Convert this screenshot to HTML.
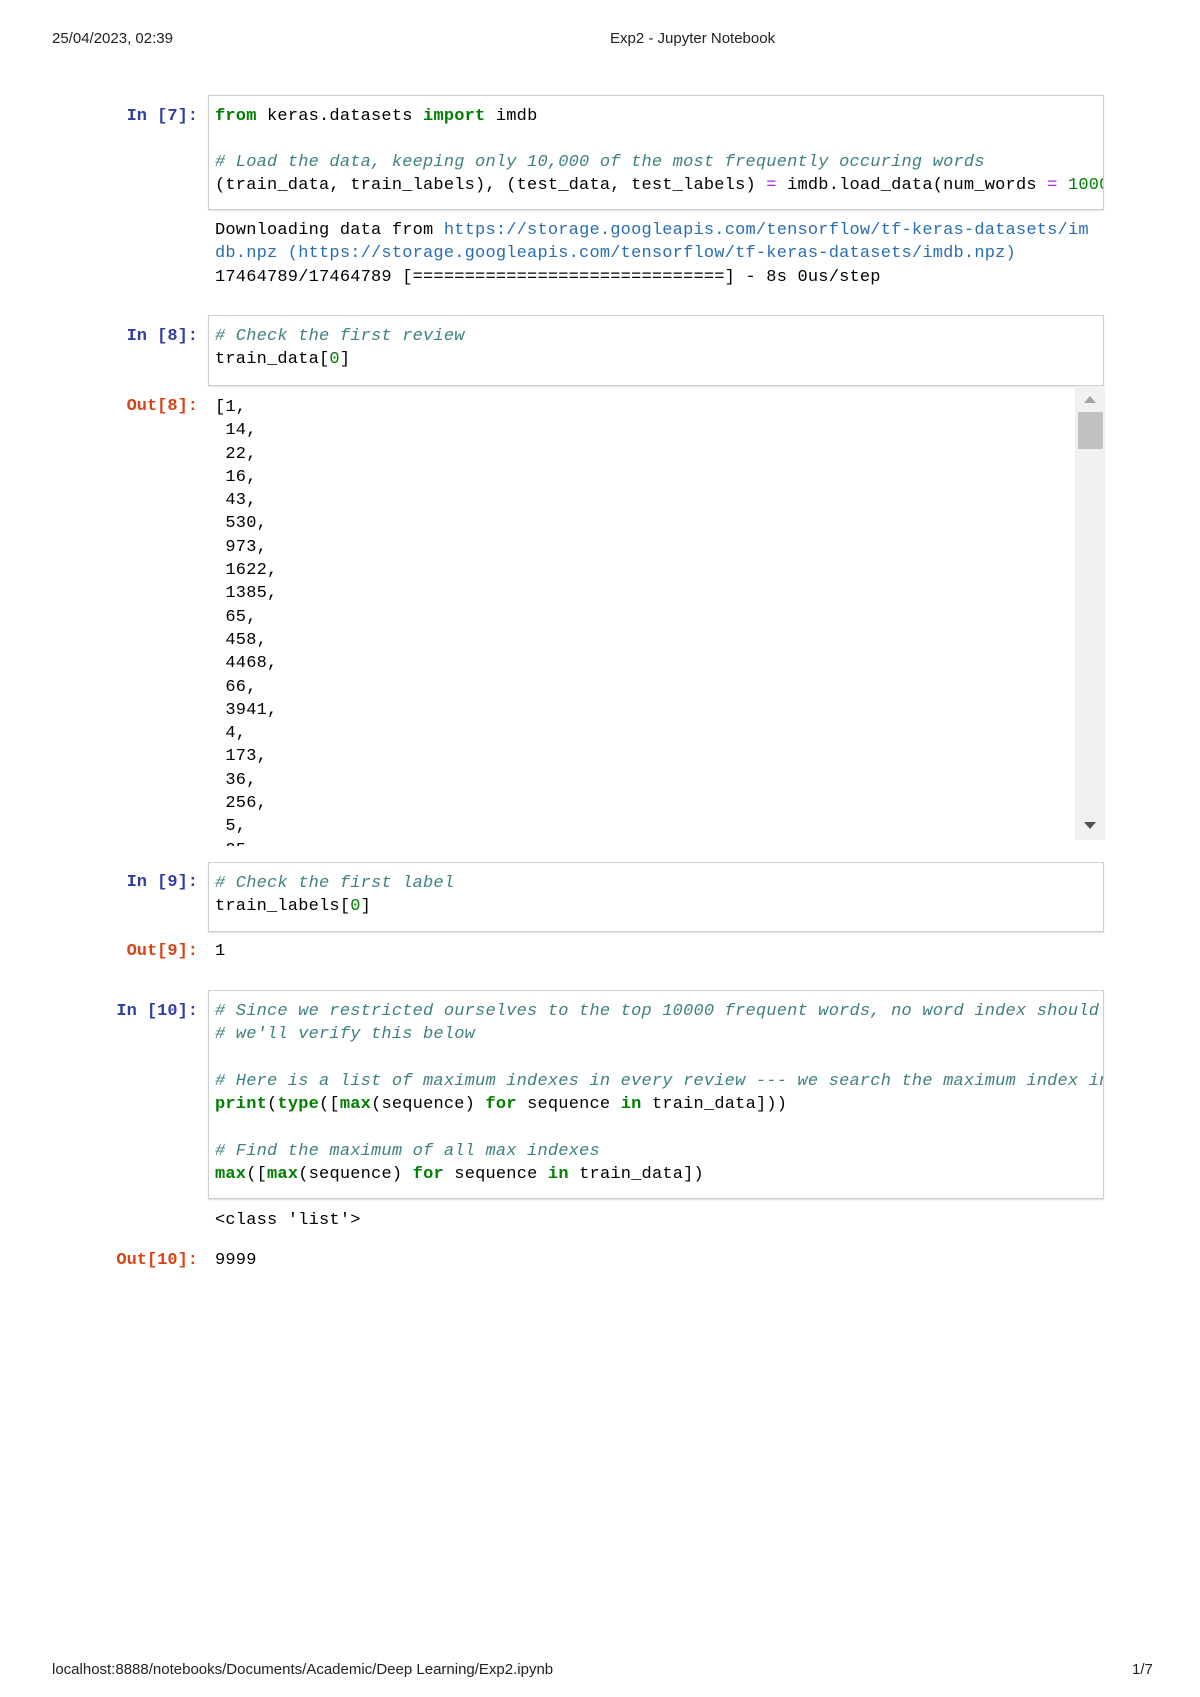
<!DOCTYPE html>
<html><head><meta charset="utf-8"><style>
body{margin:0;width:1200px;height:1697px;background:#fff;position:relative;overflow:hidden;font-family:"Liberation Sans",sans-serif}
.h{position:absolute;font-size:15px;color:#222;white-space:nowrap}
.box{position:absolute;left:208px;width:896px;border:1px solid #cfcfcf;background:#fff;overflow:hidden;box-sizing:border-box;box-shadow:0 1px 1px #ddd}
.l{position:absolute;left:215px;font-family:"Liberation Mono",monospace;font-size:17px;line-height:22px;white-space:pre;color:#000;letter-spacing:0.2px}
.bl{position:absolute;left:6px;font-family:"Liberation Mono",monospace;font-size:17px;line-height:22px;white-space:pre;color:#000;letter-spacing:0.2px}
.p{position:absolute;right:1002px;font-family:"Liberation Mono",monospace;font-size:17px;line-height:22px;white-space:pre;font-weight:bold}
.in{color:#303F9F}.out{color:#D84315}
.k{color:#008000;font-weight:bold}.c{color:#408080;font-style:italic}.n{color:#008000}.o{color:#AA22FF}.u{color:#2a6db0}
</style></head><body>
<div class="h" style="left:52px;top:30px">25/04/2023, 02:39</div>
<div class="h" style="left:610px;top:30px">Exp2 - Jupyter Notebook</div>

<div class="p in" style="top:106px">In [7]:</div>
<div class="box" style="top:95px;height:115px">
<div class="bl" style="top:10px"><span class="k">from</span> keras.datasets <span class="k">import</span> imdb</div>
<div class="bl" style="top:56px"><span class="c"># Load the data, keeping only 10,000 of the most frequently occuring words</span></div>
<div class="bl" style="top:79px">(train_data, train_labels), (test_data, test_labels) <span class="o">=</span> imdb.load_data(num_words <span class="o">=</span> <span class="n">10000</span>)</div>
</div>
<div class="l" style="top:220px">Downloading data from <span class="u">https://storage.googleapis.com/tensorflow/tf-keras-datasets/im</span></div>
<div class="l" style="top:243px"><span class="u">db.npz (https://storage.googleapis.com/tensorflow/tf-keras-datasets/imdb.npz)</span></div>
<div class="l" style="top:267px">17464789/17464789 [==============================] - 8s 0us/step</div>

<div class="p in" style="top:326px">In [8]:</div>
<div class="box" style="top:315px;height:71px">
<div class="bl" style="top:10px"><span class="c"># Check the first review</span></div>
<div class="bl" style="top:33px">train_data[<span class="n">0</span>]</div>
</div>

<div class="p out" style="top:396px">Out[8]:</div>
<div style="position:absolute;left:208px;top:386px;width:896px;height:460px;overflow:hidden">
<div class="bl" style="top:10px;left:7px;line-height:23.3px">[1,
 14,
 22,
 16,
 43,
 530,
 973,
 1622,
 1385,
 65,
 458,
 4468,
 66,
 3941,
 4,
 173,
 36,
 256,
 5,
 25,</div>
</div>
<div style="position:absolute;left:1075px;top:386px;width:30px;height:454px;background:#f1f1f1"></div>
<div style="position:absolute;left:1084px;top:396px;width:0;height:0;border-left:6px solid transparent;border-right:6px solid transparent;border-bottom:7px solid #a3a3a3"></div>
<div style="position:absolute;left:1078px;top:412px;width:25px;height:37px;background:#c1c1c1"></div>
<div style="position:absolute;left:1084px;top:822px;width:0;height:0;border-left:6px solid transparent;border-right:6px solid transparent;border-top:7px solid #505050"></div>

<div class="p in" style="top:872px">In [9]:</div>
<div class="box" style="top:862px;height:70px">
<div class="bl" style="top:10px"><span class="c"># Check the first label</span></div>
<div class="bl" style="top:33px">train_labels[<span class="n">0</span>]</div>
</div>
<div class="p out" style="top:941px">Out[9]:</div>
<div class="l" style="top:941px">1</div>

<div class="p in" style="top:1001px">In [10]:</div>
<div class="box" style="top:990px;height:209px">
<div class="bl" style="top:10px"><span class="c"># Since we restricted ourselves to the top 10000 frequent words, no word index should exceed 10000</span></div>
<div class="bl" style="top:33px"><span class="c"># we'll verify this below</span></div>
<div class="bl" style="top:80px"><span class="c"># Here is a list of maximum indexes in every review --- we search the maximum index in this list of max indexes</span></div>
<div class="bl" style="top:103px"><span class="k">print</span>(<span class="k">type</span>([<span class="k">max</span>(sequence) <span class="k">for</span> sequence <span class="k">in</span> train_data]))</div>
<div class="bl" style="top:150px"><span class="c"># Find the maximum of all max indexes</span></div>
<div class="bl" style="top:173px"><span class="k">max</span>([<span class="k">max</span>(sequence) <span class="k">for</span> sequence <span class="k">in</span> train_data])</div>
</div>
<div class="l" style="top:1210px">&lt;class 'list'&gt;</div>
<div class="p out" style="top:1250px">Out[10]:</div>
<div class="l" style="top:1250px">9999</div>

<div class="h" style="left:52px;top:1661px">localhost:8888/notebooks/Documents/Academic/Deep Learning/Exp2.ipynb</div>
<div class="h" style="left:1132px;top:1661px">1/7</div>
</body></html>
